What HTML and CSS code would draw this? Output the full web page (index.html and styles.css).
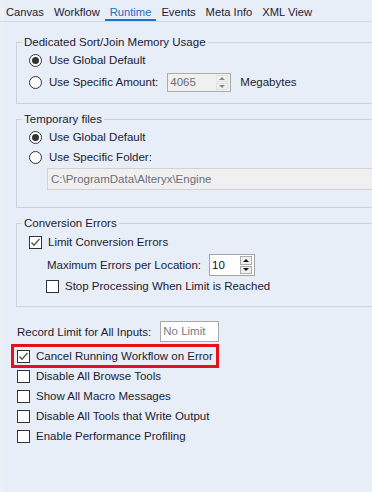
FILE: index.html
```html
<!DOCTYPE html>
<html lang="en">
<head>
  <meta charset="UTF-8">
  <meta name="viewport" content="width=device-width, initial-scale=1.0">
  <title>Workflow Configuration - Runtime</title>
  <link rel="stylesheet" href="styles.css">
</head>
<body>
  <nav class="tabs">
    <span class="tab">Canvas</span>
    <span class="tab">Workflow</span>
    <span class="tab active">Runtime</span>
    <span class="tab">Events</span>
    <span class="tab">Meta Info</span>
    <span class="tab">XML View</span>
  </nav>

  <div class="page">
    <fieldset class="group group-memory">
      <legend>Dedicated Sort/Join Memory Usage</legend>
      <div class="row first"><span class="radio on"></span>Use Global Default</div>
      <div class="row spaced">
        <span class="radio"></span>Use Specific Amount:
        <span class="spin spin-off">
          <span class="spin-val">4065</span>
          <span class="spin-btns"><span class="arrow up"></span><span class="arrow down"></span></span>
        </span>
        <span class="unit">Megabytes</span>
      </div>
    </fieldset>

    <fieldset class="group group-temp">
      <legend>Temporary files</legend>
      <div class="row first"><span class="radio on"></span>Use Global Default</div>
      <div class="row"><span class="radio"></span>Use Specific Folder:</div>
      <div class="path-box">C:\ProgramData\Alteryx\Engine</div>
    </fieldset>

    <fieldset class="group group-errors">
      <legend>Conversion Errors</legend>
      <div class="row spaced">
        <span class="check on"><svg viewBox="0 0 11 11"><polyline points="1.5,5.5 4,8.2 9.5,2"/></svg></span>Limit Conversion Errors
      </div>
      <div class="row row-tall spaced indent">
        Maximum Errors per Location:
        <span class="spin spin-on">
          <span class="spin-val">10</span>
          <span class="spin-btns"><span class="arrow up"></span><span class="arrow down"></span></span>
        </span>
      </div>
      <div class="row indent-check"><span class="check"></span>Stop Processing When Limit is Reached</div>
    </fieldset>

    <div class="record-row">
      Record Limit for All Inputs:
      <span class="text-box">No Limit</span>
    </div>

    <div class="options">
      <div class="row highlight">
        <span class="check on"><svg viewBox="0 0 11 11"><polyline points="1.5,5.5 4,8.2 9.5,2"/></svg></span>Cancel Running Workflow on Error
      </div>
      <div class="row"><span class="check"></span>Disable All Browse Tools</div>
      <div class="row"><span class="check"></span>Show All Macro Messages</div>
      <div class="row"><span class="check"></span>Disable All Tools that Write Output</div>
      <div class="row"><span class="check"></span>Enable Performance Profiling</div>
    </div>
  </div>
</body>
</html>
```

FILE: styles.css
```css
html {
  background-color: #e8eef8;
}

body {
  margin: 0;
  min-height: 492px;
  overflow: hidden;
  font-family: 'Liberation Sans', Arial, sans-serif;
  font-size: 11.5px;
  color: #1b1b33;
  background: linear-gradient(to right, #edf1f6 4px, #e8eef8 4px);
}

/* tab strip */
.tabs {
  display: flex;
  height: 21px;
  padding-left: 1px;
  border-bottom: 1px solid #d4dbe5;
  font-size: 11.2px;
}

.tab {
  box-sizing: border-box;
  height: 21px;
  padding: 5px 5px 0;
  line-height: 14px;
  border-bottom: 2px solid transparent;
  color: #1e1a36;
}

.tab.active {
  color: #1c6dc4;
  border-bottom-color: #1a74cc;
}

/* content */
.page {
  padding: 13px 0 0 16px;
}

.group {
  margin: 0;
  padding: 0 0 11px 12px;
  border: 1px solid #cdd2da;
  border-right: none;
}

.group legend {
  margin-left: -7px;
  padding: 0 2px;
  line-height: 14px;
}

.group-temp,
.group-errors {
  margin-top: 8px;
}

.group-temp {
  padding-bottom: 17px;
}

.group-errors {
  padding-bottom: 10px;
}

.row {
  display: flex;
  align-items: center;
  height: 20px;
  white-space: nowrap;
}

.row.first {
  margin-top: 1px;
}

.row.spaced {
  margin-top: 2px;
}

.row-tall {
  height: 22px;
}

.indent {
  padding-left: 18px;
}

.indent-check {
  padding-left: 17px;
}

/* radio buttons and check boxes */
.radio {
  box-sizing: border-box;
  width: 13px;
  height: 13px;
  margin-right: 7px;
  border: 1px solid #333;
  border-radius: 50%;
  background: #fff;
  display: flex;
  align-items: center;
  justify-content: center;
}

.radio.on::after {
  content: "";
  width: 7px;
  height: 7px;
  border-radius: 50%;
  background: #333;
}

.check {
  box-sizing: border-box;
  width: 13px;
  height: 13px;
  margin-right: 6px;
  border: 1px solid #333;
  background: #fff;
  flex-shrink: 0;
}

.check svg {
  display: block;
  width: 11px;
  height: 11px;
}

.check polyline {
  fill: none;
  stroke: #505050;
  stroke-width: 1.3;
}

/* spinners */
.spin {
  box-sizing: border-box;
  display: inline-flex;
  border: 1px solid #acacac;
}

.spin-off {
  width: 64px;
  height: 19px;
  margin-left: 9px;
  background: #f0f0f0;
  color: #6d6d78;
}

.spin-on {
  width: 46px;
  height: 22px;
  margin-left: 8px;
  background: #fff;
  border-color: #a3a3a3;
  color: #111;
}

.spin-val {
  flex: 1;
  padding-left: 2px;
  align-self: center;
}

.spin-btns {
  display: flex;
  flex-direction: column;
  justify-content: center;
  gap: 1px;
  width: 12px;
  padding: 1px 2px 1px 0;
}

.arrow {
  flex: 1;
  display: flex;
  align-items: center;
  justify-content: center;
  background: #f0f0f0;
}

.spin-off .arrow {
  border: 1px solid #e2e2e2;
}

.spin-on .arrow {
  border: 1px solid #adadad;
}

.arrow::after {
  content: "";
  border-left: 3px solid transparent;
  border-right: 3px solid transparent;
}

.arrow.up::after {
  border-bottom: 3px solid #888;
}

.arrow.down::after {
  border-top: 3px solid #888;
}

.spin-on .arrow.up::after {
  border-bottom-color: #111;
}

.spin-on .arrow.down::after {
  border-top-color: #111;
}

.unit {
  margin-left: 9px;
}

/* text boxes */
.path-box {
  box-sizing: border-box;
  height: 22px;
  margin: 1px 0 0 18px;
  padding-left: 3px;
  line-height: 20px;
  border: 1px solid #d2d2d2;
  border-right: none;
  background: #f0f0f0;
  color: #6d6d78;
}

.record-row {
  display: flex;
  align-items: center;
  height: 21px;
  margin: 14px 0 0 1px;
}

.text-box {
  box-sizing: border-box;
  width: 59px;
  height: 21px;
  margin-left: 9px;
  padding-left: 2px;
  line-height: 19px;
  border: 1px solid #a8a8a8;
  background: #fff;
  color: #7a7a84;
}

/* bottom check list */
.options {
  margin-top: 4px;
  padding-left: 1px;
}

.highlight {
  width: fit-content;
  margin-left: -4px;
  padding: 0 4px;
  outline: 3px solid #e8101a;
  outline-offset: -1px;
}
```
